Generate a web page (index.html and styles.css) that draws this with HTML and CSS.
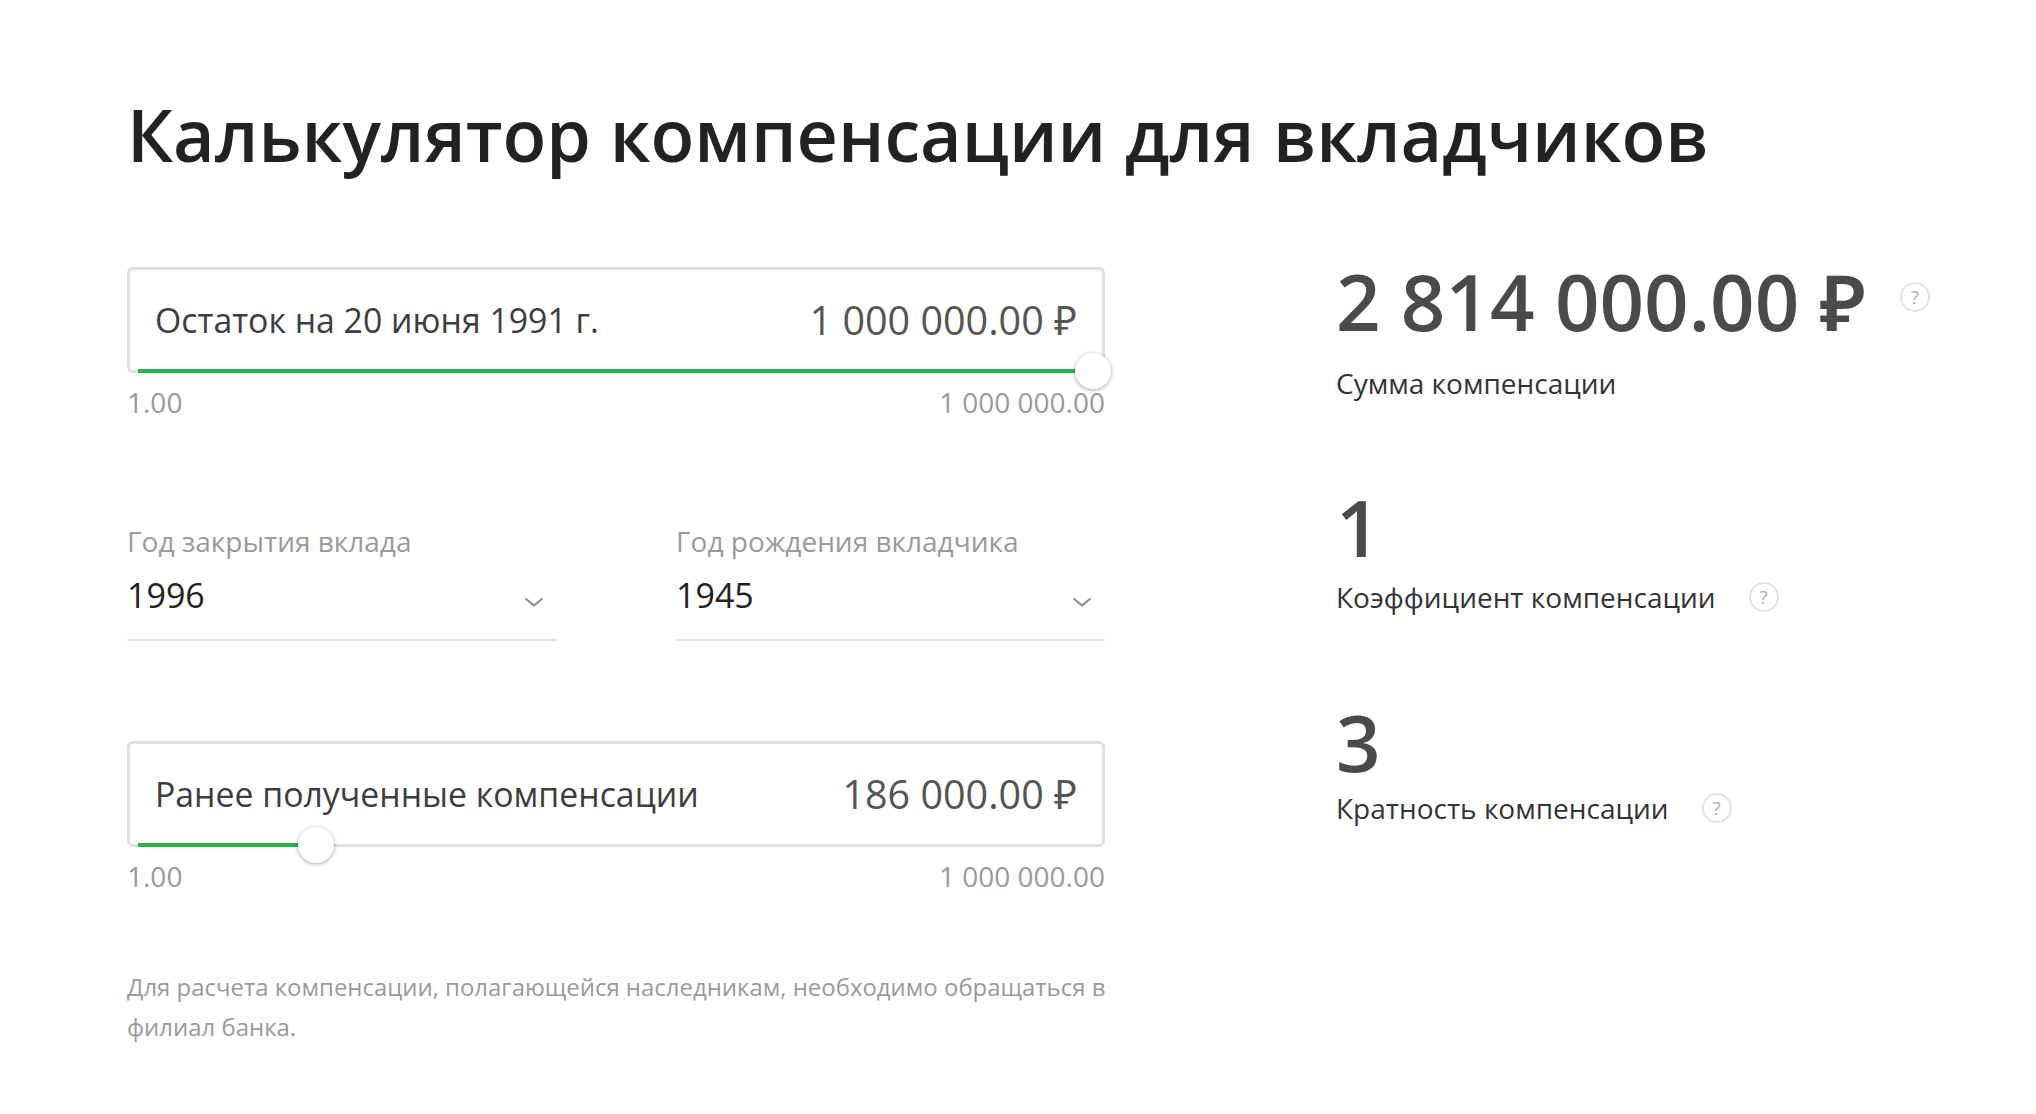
FILE: index.html
```html
<!DOCTYPE html>
<html lang="ru">
<head>
<meta charset="utf-8">
<title>Калькулятор компенсации для вкладчиков</title>
<link rel="stylesheet" href="styles.css">
</head>
<body>
<div class="page">
  <h1 class="title">Калькулятор компенсации для вкладчиков</h1>
  <div class="calc">
    <div class="form">
      <div class="field">
        <div class="box">
          <span class="box-label">Остаток на 20 июня 1991 г.</span>
          <span class="box-value">1 000 000.00 ₽</span>
          <div class="track">
            <div class="track-fill" style="width:100%"></div>
            <div class="thumb" style="left:100%"></div>
          </div>
        </div>
        <div class="range"><span>1.00</span><span>1 000 000.00</span></div>
      </div>

      <div class="selects">
        <div class="select">
          <div class="select-label">Год закрытия вклада</div>
          <div class="select-row">
            <span class="select-value">1996</span>
            <svg class="chevron" width="20" height="10" viewBox="0 0 20 10"><path d="M1.5 1.5 L10 8.5 L18.5 1.5" fill="none" stroke="#8a8a8a" stroke-width="2"/></svg>
          </div>
        </div>
        <div class="select">
          <div class="select-label">Год рождения вкладчика</div>
          <div class="select-row">
            <span class="select-value">1945</span>
            <svg class="chevron" width="20" height="10" viewBox="0 0 20 10"><path d="M1.5 1.5 L10 8.5 L18.5 1.5" fill="none" stroke="#8a8a8a" stroke-width="2"/></svg>
          </div>
        </div>
      </div>

      <div class="field field-second">
        <div class="box">
          <span class="box-label">Ранее полученные компенсации</span>
          <span class="box-value">186 000.00 ₽</span>
          <div class="track">
            <div class="track-fill" style="width:18.6%"></div>
            <div class="thumb" style="left:18.6%"></div>
          </div>
        </div>
        <div class="range"><span>1.00</span><span>1 000 000.00</span></div>
      </div>

      <p class="note">Для расчета компенсации, полагающейся наследникам, необходимо обращаться в филиал банка.</p>
    </div>

    <div class="results">
      <div class="result result-sum">
        <div class="result-value">2 814 000.00 ₽<span class="help help-big">?</span></div>
        <div class="result-label">Сумма компенсации</div>
      </div>
      <div class="result result-coef">
        <div class="result-value">1</div>
        <div class="result-label">Коэффициент компенсации<span class="help">?</span></div>
      </div>
      <div class="result result-mult">
        <div class="result-value">3</div>
        <div class="result-label">Кратность компенсации<span class="help">?</span></div>
      </div>
    </div>
  </div>
</div>
</body>
</html>
```

FILE: styles.css
```css
* { box-sizing: border-box; }

html, body {
  margin: 0;
  padding: 0;
  background: #ffffff;
}

body {
  font-family: "Open Sans", "Noto Sans", "DejaVu Sans", sans-serif;
  color: #333333;
}

.page {
  padding: 91px 0 40px 127px;
}

.title {
  margin: 0;
  font-size: 71.8px;
  line-height: 86px;
  font-weight: 600;
  color: #222222;
}

.calc {
  display: grid;
  grid-template-columns: 978px 1fr;
  column-gap: 231px;
  margin-top: 90px;
}

/* input boxes with slider */
.box {
  position: relative;
  height: 106px;
  border: 3px solid #e0e0e0;
  border-radius: 6px;
  padding: 0 25px;
  display: flex;
  align-items: center;
  justify-content: space-between;
}

.box-label {
  font-size: 33.8px;
  line-height: 46px;
  color: #3d3d3d;
}

.box-value {
  font-size: 39.5px;
  line-height: 52px;
  color: #555555;
}

.track {
  position: absolute;
  left: 8px;
  right: 9px;
  bottom: -3px;
  height: 4px;
}

.track-fill {
  height: 4px;
  background: #2bb24c;
}

.thumb {
  position: absolute;
  top: -16px;
  width: 36px;
  height: 36px;
  margin-left: -18px;
  border-radius: 50%;
  background: #ffffff;
  box-shadow: 0 1px 4px rgba(0, 0, 0, 0.35);
}

.range {
  display: flex;
  justify-content: space-between;
  margin-top: 13px;
  font-size: 28px;
  line-height: 32px;
  color: #9a9a9a;
}

/* selects */
.selects {
  display: grid;
  grid-template-columns: 430px 429px;
  justify-content: space-between;
  margin-top: 103px;
}

.select {
  border-bottom: 2px solid #e2e2e2;
  padding-bottom: 21px;
}

.select-label {
  font-size: 28px;
  line-height: 40px;
  color: #9a9a9a;
}

.select-row {
  display: flex;
  align-items: center;
  justify-content: space-between;
  margin-top: 11px;
  padding-right: 13px;
}

.select-value {
  font-size: 34px;
  line-height: 46px;
  color: #222222;
}

.chevron {
  display: block;
  margin-top: 14px;
}

.field-second {
  margin-top: 100px;
}

.note {
  margin: 75px -14px 0 0;
  font-size: 23.95px;
  line-height: 40px;
  color: #9a9a9a;
}

/* results */
.result-value {
  display: flex;
  align-items: center;
  font-size: 78px;
  line-height: 68px;
  font-weight: 600;
  color: #4a4a4a;
}

.result-label {
  display: flex;
  align-items: center;
  margin-top: 28px;
  font-size: 28px;
  line-height: 40px;
  color: #333333;
}

.result-coef {
  margin-top: 90px;
}

.result-coef .result-label {
  margin-top: 16px;
}

.result-mult {
  margin-top: 91px;
}

.result-mult .result-label {
  margin-top: 12px;
}

.help {
  display: inline-flex;
  align-items: center;
  justify-content: center;
  flex: none;
  width: 30px;
  height: 30px;
  margin-left: 33px;
  border: 2px solid #e3e3e3;
  border-radius: 50%;
  font-size: 19px;
  line-height: 1;
  font-weight: 400;
  color: #b0b0b0;
}

.help-big {
  margin-left: 34px;
  margin-top: -8px;
}
```
